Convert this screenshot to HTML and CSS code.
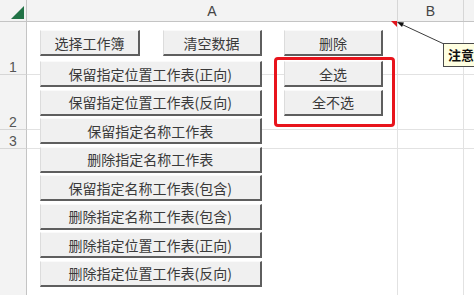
FILE: index.html
```html
<!DOCTYPE html>
<html lang="zh-CN">
<head>
<meta charset="utf-8">
<title>工作表管理</title>
<link rel="stylesheet" href="styles.css">
</head>
<body>
<div class="sheet">
  <div class="colheads">
    <div class="corner">
      <svg class="corner-tri" width="13" height="13" viewBox="0 0 13 13"><polygon points="0,13 13,13 13,0" fill="#217346"/></svg>
    </div>
    <div class="colhead">A</div>
    <div class="colhead">B</div>
    <div class="colhead last"></div>
  </div>
  <div class="grid">
    <div class="rowhead">1</div><div class="cell"></div><div class="cell"></div><div class="cell last"></div>
    <div class="rowhead">2</div><div class="cell"></div><div class="cell"></div><div class="cell last"></div>
    <div class="rowhead">3</div><div class="cell"></div><div class="cell"></div><div class="cell last"></div>
    <div class="rowhead"></div><div class="cell"></div><div class="cell"></div><div class="cell last"></div>
  </div>

  <div class="controls">
    <button class="btn">选择工作簿</button>
    <button class="btn">清空数据</button>
    <button class="btn">删除</button>
    <button class="btn wide">保留指定位置工作表(正向)</button>
    <button class="btn">全选</button>
    <button class="btn wide">保留指定位置工作表(反向)</button>
    <button class="btn">全不选</button>
    <button class="btn wide">保留指定名称工作表</button>
    <button class="btn wide">删除指定名称工作表</button>
    <button class="btn wide">保留指定名称工作表(包含)</button>
    <button class="btn wide">删除指定名称工作表(包含)</button>
    <button class="btn wide">删除指定位置工作表(正向)</button>
    <button class="btn wide">删除指定位置工作表(反向)</button>
  </div>

  <div class="redbox"></div>

  <svg class="comment-link" width="474" height="295" viewBox="0 0 474 295">
    <polygon points="391,21 397,21 397,27" fill="#e0141c"/>
    <line x1="401" y1="24" x2="444" y2="44" stroke="#3c3c3c" stroke-width="1"/>
    <polygon points="397,22 404,22.5 402,27" fill="#111"/>
  </svg>
  <div class="comment">注意</div>
</div>
</body>
</html>
```
FILE: styles.css
```css
* { box-sizing: border-box; }
html, body { margin: 0; padding: 0; }
body {
  width: 474px;
  height: 295px;
  overflow: hidden;
  background: #ffffff;
  font-family: "Noto Sans CJK SC", "Noto Sans", sans-serif;
}
.sheet {
  position: relative;
  width: 474px;
  height: 295px;
  overflow: hidden;
  background: #fff;
}
.colheads {
  display: grid;
  grid-template-columns: 27px 371px 66px 1fr;
  height: 22px;
  background: #f3f3f3;
  border-bottom: 1px solid #c4c4c4;
}
.corner {
  border-right: 1px solid #c4c4c4;
  display: flex;
  align-items: flex-start;
  justify-content: flex-end;
  padding: 6px 2px 0 0;
}
.corner-tri { display: block; }
.colhead {
  border-right: 1px solid #d6d6d6;
  display: flex;
  align-items: center;
  justify-content: center;
  font-family: "Liberation Sans", "Noto Sans", sans-serif;
  font-size: 14px;
  color: #444;
  padding-top: 1px;
}
.colhead.last { border-right: 0; }
.grid {
  display: grid;
  grid-template-columns: 27px 371px 66px 1fr;
  grid-template-rows: 53px 55px 19px 220px;
}
.rowhead {
  background: #f3f3f3;
  border-right: 1px solid #c4c4c4;
  border-bottom: 1px solid #d6d6d6;
  display: flex;
  align-items: flex-end;
  justify-content: center;
  font-family: "Liberation Sans", "Noto Sans", sans-serif;
  font-size: 14px;
  color: #555;
  line-height: 13px;
  padding-bottom: 0;
}
.cell {
  border-right: 1px solid #e2e2e2;
  border-bottom: 1px solid #e2e2e2;
}
.cell.last { border-right: 0; }

.controls {
  position: absolute;
  left: 40px;
  top: 30px;
  display: grid;
  grid-template-columns: 100px 99px 99px;
  grid-template-rows: 28.5px repeat(8, 26px);
  column-gap: 22.5px;
  row-gap: 2.5px;
  align-items: start;
}
.btn {
  height: 26px;
  margin: 0;
  padding: 0;
  background: #f0f0f0;
  border-top: 1px solid #fafafa;
  border-left: 1px solid #dcdcdc;
  border-right: 2px solid #5e5e5e;
  border-bottom: 2px solid #5e5e5e;
  border-radius: 0;
  font-family: "Noto Sans CJK SC", "Noto Sans", sans-serif;
  font-size: 14px;
  color: #3a3a3a;
  line-height: 22px;
  text-align: center;
  white-space: nowrap;
}
.btn.wide { grid-column: 1 / span 2; }

.redbox {
  position: absolute;
  left: 274px;
  top: 57px;
  width: 121px;
  height: 70px;
  border: 3px solid #e8141c;
  border-radius: 4px;
}
.comment-link {
  position: absolute;
  left: 0;
  top: 0;
}
.comment {
  position: absolute;
  left: 443px;
  top: 43px;
  width: 60px;
  height: 24px;
  background: #ffffe1;
  border: 1px solid #4a4a4a;
  font-family: "Noto Sans CJK SC", sans-serif;
  font-weight: bold;
  font-size: 13px;
  line-height: 20px;
  color: #111;
  padding: 1px 0 0 4px;
}
```
